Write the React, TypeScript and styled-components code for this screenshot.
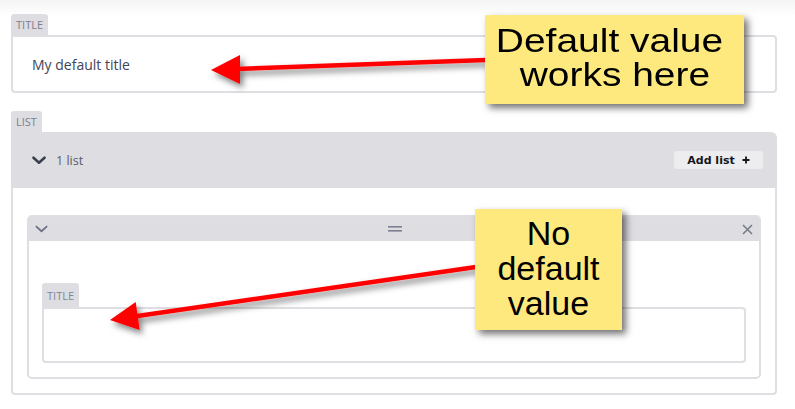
import styled, { createGlobalStyle } from "styled-components";

const GlobalStyle = createGlobalStyle`
  html, body {
    margin: 0;
    padding: 0;
    background: #fff;
  }
  body {
    font-family: "Open Sans", "Liberation Sans", sans-serif;
  }
`;

const Page = styled.div`
  position: relative;
  width: 795px;
  height: 409px;
  overflow: hidden;
  background: linear-gradient(#f4f4f5 0px, #fff 16px);
  padding: 14px 18px 0 11px;
  box-sizing: border-box;
`;

const Field = styled.div<{ $gap?: number }>`
  display: flex;
  flex-direction: column;
  align-items: flex-start;
  margin-top: ${(p) => p.$gap ?? 0}px;
`;

const Tab = styled.div<{ $tone?: string; $h?: number }>`
  height: ${(p) => p.$h ?? 21}px;
  line-height: ${(p) => (p.$h ?? 21) + 1}px;
  padding: 0 5px;
  background: #dedee2;
  border-radius: 3px 3px 0 0;
  font-size: 11px;
  color: ${(p) => p.$tone ?? "#7a7f90"};
  text-transform: uppercase;
`;

const InputBox = styled.div<{ $h: number }>`
  align-self: stretch;
  height: ${(p) => p.$h}px;
  box-sizing: border-box;
  border: 2px solid #dfdfe3;
  border-radius: 0 4px 4px 4px;
  display: flex;
  align-items: center;
  padding: 0 19px;
  font-size: 14px;
  color: #3f4458;
`;

const ListHead = styled.div`
  align-self: stretch;
  height: 56px;
  background: #dedee2;
  border-radius: 0 6px 0 0;
  display: flex;
  align-items: center;
  padding: 0 14px 0 21px;
`;

const Count = styled.span`
  margin-left: 10px;
  font-size: 12.5px;
  color: #585c6a;
`;

const AddButton = styled.button`
  margin-left: auto;
  width: 89px;
  height: 18px;
  border: none;
  border-radius: 3px;
  background: #ededef;
  font-family: "DejaVu Sans", "Liberation Sans", sans-serif;
  font-weight: 700;
  font-size: 11px;
  color: #15171d;
  padding: 0;
  display: flex;
  align-items: center;
  justify-content: center;
  gap: 7px;
`;

const ListBody = styled.div`
  align-self: stretch;
  height: 207px;
  box-sizing: border-box;
  border: 2px solid #dfdfe3;
  border-top: none;
  border-radius: 0 0 4px 4px;
  padding: 27px 14px 0 14px;
`;

const Item = styled.div`
  border: 2px solid #dfdfe3;
  border-radius: 5px;
  height: 164px;
  box-sizing: border-box;
  display: flex;
  flex-direction: column;
`;

const ItemHead = styled.div`
  height: 24px;
  background: #dedee2;
  display: flex;
  align-items: center;
  justify-content: space-between;
  padding: 0 6px 0 6px;
`;

const ItemBody = styled.div`
  padding: 42px 13px 0 13px;
`;

const Callout = styled.div<{ $x: number; $y: number; $w: number; $h: number }>`
  position: absolute;
  left: ${(p) => p.$x}px;
  top: ${(p) => p.$y}px;
  width: ${(p) => p.$w}px;
  height: ${(p) => p.$h}px;
  box-sizing: border-box;
  background: #fde97e;
  box-shadow: 4px 4px 7px rgba(0, 0, 0, 0.55);
  display: flex;
  align-items: center;
  justify-content: center;
  text-align: center;
  font-family: "Liberation Sans", Arial, sans-serif;
  color: #000;
`;

const CalloutText = styled.div<{ $size: number; $lh: number; $stretch?: number }>`
  font-size: ${(p) => p.$size}px;
  line-height: ${(p) => p.$lh}px;
  transform: scaleX(${(p) => p.$stretch ?? 1});
  margin-top: -3px;
`;

const Overlay = styled.svg`
  position: absolute;
  left: 0;
  top: 0;
  pointer-events: none;
`;

const Chevron = ({ size, color, width }: { size: number; color: string; width: number }) => (
  <svg width={size} height={size * 0.6} viewBox="0 0 14 8">
    <path d="M1.5 1.5 L7 6.5 L12.5 1.5" fill="none" stroke={color} strokeWidth={width} strokeLinecap="round" strokeLinejoin="round" />
  </svg>
);

const Handle = () => (
  <svg width="14" height="6" viewBox="0 0 14 6">
    <rect x="0" y="0" width="14" height="1.6" fill="#7b8090" />
    <rect x="0" y="4" width="14" height="1.6" fill="#7b8090" />
  </svg>
);

const Close = () => (
  <svg width="11" height="11" viewBox="0 0 11 11">
    <path d="M1 1 L10 10 M10 1 L1 10" stroke="#777c8c" strokeWidth="1.6" />
  </svg>
);

const Plus = () => (
  <svg width="8" height="8" viewBox="0 0 8 8">
    <path d="M4 0.5 V7.5 M0.5 4 H7.5" stroke="#15171d" strokeWidth="1.8" />
  </svg>
);

export default function App() {
  return (
    <Page>
      <GlobalStyle />
      <Field>
        <Tab>Title</Tab>
        <InputBox $h={58}>My default title</InputBox>
      </Field>

      <Field $gap={18}>
        <Tab>List</Tab>
        <ListHead>
          <Chevron size={14} color="#3c404c" width={2.6} />
          <Count>1 list</Count>
          <AddButton>
            Add list <Plus />
          </AddButton>
        </ListHead>
        <ListBody>
          <Item>
            <ItemHead>
              <Chevron size={13} color="#6d7285" width={2} />
              <Handle />
              <Close />
            </ItemHead>
            <ItemBody>
              <Field>
                <Tab $tone="#7c879f" $h={24}>Title</Tab>
                <InputBox $h={56} />
              </Field>
            </ItemBody>
          </Item>
        </ListBody>
      </Field>

      <Overlay width="795" height="409">
        <defs>
          <filter id="arrowShadow" x="-10%" y="-50%" width="120%" height="200%">
            <feDropShadow dx="3" dy="4" stdDeviation="3" floodColor="#000" floodOpacity="0.5" />
          </filter>
        </defs>
        <g filter="url(#arrowShadow)" fill="#ff0000">
          <line x1="486" y1="60" x2="236" y2="69" stroke="#ff0000" strokeWidth="4.5" />
          <polygon points="211,70 240,55 240,84" />
          <line x1="476" y1="267" x2="134" y2="316.5" stroke="#ff0000" strokeWidth="4.5" />
          <polygon points="110,320 135.7,302 139.7,330" />
        </g>
      </Overlay>

      <Callout $x={485} $y={15} $w={259} $h={89}>
        <CalloutText $size={33} $lh={34} $stretch={1.18}>
          Default value{"\u00a0"}
          <br />
          works here
        </CalloutText>
      </Callout>
      <Callout $x={475} $y={209} $w={147} $h={121}>
        <CalloutText $size={34} $lh={35}>
          No
          <br />
          default
          <br />
          value
        </CalloutText>
      </Callout>
    </Page>
  );
}
